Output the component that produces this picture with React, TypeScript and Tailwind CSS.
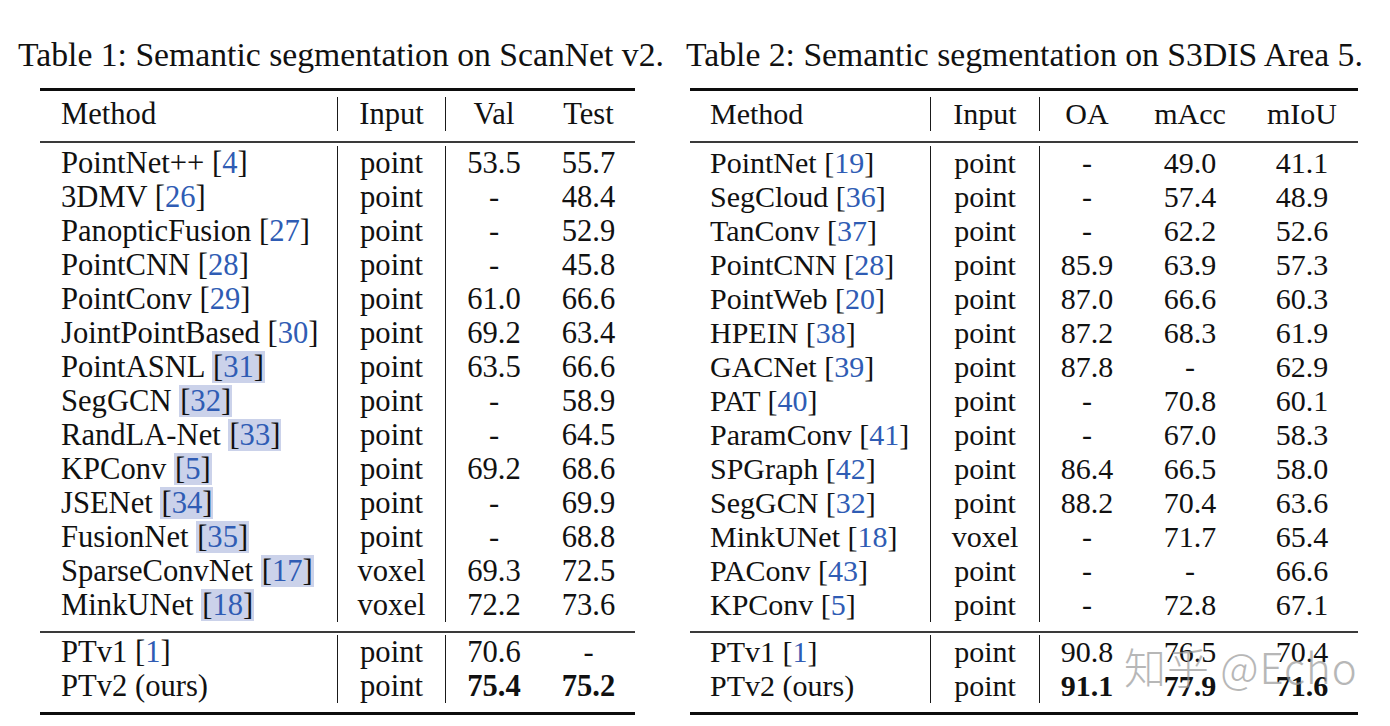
import React from "react";

type Cite = { n: string; hl?: boolean };
type LRow = { m: string; c?: Cite; i: string; v: string[]; b?: boolean };

const L1: LRow[] = [
  { m: "PointNet++", c: { n: "4" }, i: "point", v: ["53.5", "55.7"] },
  { m: "3DMV", c: { n: "26" }, i: "point", v: ["-", "48.4"] },
  { m: "PanopticFusion", c: { n: "27" }, i: "point", v: ["-", "52.9"] },
  { m: "PointCNN", c: { n: "28" }, i: "point", v: ["-", "45.8"] },
  { m: "PointConv", c: { n: "29" }, i: "point", v: ["61.0", "66.6"] },
  { m: "JointPointBased", c: { n: "30" }, i: "point", v: ["69.2", "63.4"] },
  { m: "PointASNL", c: { n: "31", hl: true }, i: "point", v: ["63.5", "66.6"] },
  { m: "SegGCN", c: { n: "32", hl: true }, i: "point", v: ["-", "58.9"] },
  { m: "RandLA-Net", c: { n: "33", hl: true }, i: "point", v: ["-", "64.5"] },
  { m: "KPConv", c: { n: "5", hl: true }, i: "point", v: ["69.2", "68.6"] },
  { m: "JSENet", c: { n: "34", hl: true }, i: "point", v: ["-", "69.9"] },
  { m: "FusionNet", c: { n: "35", hl: true }, i: "point", v: ["-", "68.8"] },
  { m: "SparseConvNet", c: { n: "17", hl: true }, i: "voxel", v: ["69.3", "72.5"] },
  { m: "MinkUNet", c: { n: "18", hl: true }, i: "voxel", v: ["72.2", "73.6"] },
];
const L2: LRow[] = [
  { m: "PTv1", c: { n: "1" }, i: "point", v: ["70.6", "-"] },
  { m: "PTv2 (ours)", i: "point", v: ["75.4", "75.2"], b: true },
];

const R1: LRow[] = [
  { m: "PointNet", c: { n: "19" }, i: "point", v: ["-", "49.0", "41.1"] },
  { m: "SegCloud", c: { n: "36" }, i: "point", v: ["-", "57.4", "48.9"] },
  { m: "TanConv", c: { n: "37" }, i: "point", v: ["-", "62.2", "52.6"] },
  { m: "PointCNN", c: { n: "28" }, i: "point", v: ["85.9", "63.9", "57.3"] },
  { m: "PointWeb", c: { n: "20" }, i: "point", v: ["87.0", "66.6", "60.3"] },
  { m: "HPEIN", c: { n: "38" }, i: "point", v: ["87.2", "68.3", "61.9"] },
  { m: "GACNet", c: { n: "39" }, i: "point", v: ["87.8", "-", "62.9"] },
  { m: "PAT", c: { n: "40" }, i: "point", v: ["-", "70.8", "60.1"] },
  { m: "ParamConv", c: { n: "41" }, i: "point", v: ["-", "67.0", "58.3"] },
  { m: "SPGraph", c: { n: "42" }, i: "point", v: ["86.4", "66.5", "58.0"] },
  { m: "SegGCN", c: { n: "32" }, i: "point", v: ["88.2", "70.4", "63.6"] },
  { m: "MinkUNet", c: { n: "18" }, i: "voxel", v: ["-", "71.7", "65.4"] },
  { m: "PAConv", c: { n: "43" }, i: "point", v: ["-", "-", "66.6"] },
  { m: "KPConv", c: { n: "5" }, i: "point", v: ["-", "72.8", "67.1"] },
];
const R2: LRow[] = [
  { m: "PTv1", c: { n: "1" }, i: "point", v: ["90.8", "76.5", "70.4"] },
  { m: "PTv2 (ours)", i: "point", v: ["91.1", "77.9", "71.6"], b: true },
];

function CiteSpan({ c }: { c: Cite }) {
  const inner = (
    <>
      [<span className="text-[#2f5cb4]">{c.n}</span>]
    </>
  );
  if (c.hl)
    return <span className="inline-block bg-[#cbd2ea] px-[1px] leading-[32px]">{inner}</span>;
  return <span>{inner}</span>;
}

function Row({ r, cols, methodPad }: { r: LRow; cols: string; methodPad: string }) {
  return (
    <div className={`grid h-[34px] leading-[34px] ${cols}`}>
      <div className={`border-r border-[#1a1a1a] whitespace-nowrap ${methodPad}`}>
        {r.m}
        {r.c ? <> <CiteSpan c={r.c} /></> : null}
      </div>
      <div className="border-r border-[#1a1a1a] text-center">{r.i}</div>
      {r.v.map((x, k) => (
        <div key={k} className={`text-center ${r.b ? "font-bold" : ""}`}>
          {x}
        </div>
      ))}
    </div>
  );
}

function Table({
  width,
  cols,
  heads,
  body1,
  body2,
  methodPad,
  size,
}: {
  width: string;
  cols: string;
  heads: string[];
  body1: LRow[];
  body2: LRow[];
  methodPad: string;
  size: string;
}) {
  return (
    <div className={`${width} ${size}`}>
      <div className="h-[3px] bg-[#0d0d0d]" />
      <div className="pt-[6px] pb-[10px]">
        <div className={`grid h-[34px] leading-[34px] ${cols}`}>
          <div className={`border-r border-[#1a1a1a] ${methodPad}`}>{heads[0]}</div>
          <div className="border-r border-[#1a1a1a] text-center">{heads[1]}</div>
          {heads.slice(2).map((h) => (
            <div key={h} className="text-center">
              {h}
            </div>
          ))}
        </div>
      </div>
      <div className="h-[2px] bg-[#3a3a3a]" />
      <div className="pt-[3px] pb-[9px]">
        {body1.map((r) => (
          <Row key={r.m} r={r} cols={cols} methodPad={methodPad} />
        ))}
      </div>
      <div className="h-[2px] bg-[#3a3a3a]" />
      <div className="pt-[2px] pb-[9px]">
        {body2.map((r) => (
          <Row key={r.m} r={r} cols={cols} methodPad={methodPad} />
        ))}
      </div>
      <div className="h-[3px] bg-[#0d0d0d]" />
    </div>
  );
}

export default function App() {
  return (
    <div
      className="relative w-[1390px] h-[726px] bg-white text-[#111] overflow-hidden"
      style={{ fontFamily: '"Liberation Serif", "Times New Roman", serif' }}
    >
      <div className="flex pl-[18px] pt-[35px] gap-[18px]">
        <div className="w-[650px] flex flex-col">
          <div className="text-[33.7px] leading-[40px] whitespace-nowrap">
            Table 1: Semantic segmentation on ScanNet v2.
          </div>
          <div className="mt-[13px] ml-[22px]">
            <Table
              width="w-[595px]"
              size="text-[30.6px]"
              cols="grid-cols-[298px_108px_96px_93px]"
              heads={["Method", "Input", "Val", "Test"]}
              body1={L1}
              body2={L2}
              methodPad="pl-[21px]"
            />
          </div>
        </div>
        <div className="flex flex-col">
          <div className="text-[33.7px] leading-[40px] whitespace-nowrap">
            Table 2: Semantic segmentation on S3DIS Area 5.
          </div>
          <div className="mt-[13px] ml-[4px]">
            <Table
              width="w-[668px]"
              size="text-[30px]"
              cols="grid-cols-[241px_109px_94px_112px_112px]"
              heads={["Method", "Input", "OA", "mAcc", "mIoU"]}
              body1={R1}
              body2={R2}
              methodPad="pl-[20px]"
            />
          </div>
        </div>
      </div>
      <div
        className="absolute left-[1124px] top-[640px] text-[42px] leading-[52px] text-[#9a9a9a] opacity-70 whitespace-nowrap font-light tracking-[1px]"
        style={{ fontFamily: '"Noto Sans CJK SC", "Noto Sans", sans-serif' }}
      >
        知乎 @Echo
      </div>
    </div>
  );
}
